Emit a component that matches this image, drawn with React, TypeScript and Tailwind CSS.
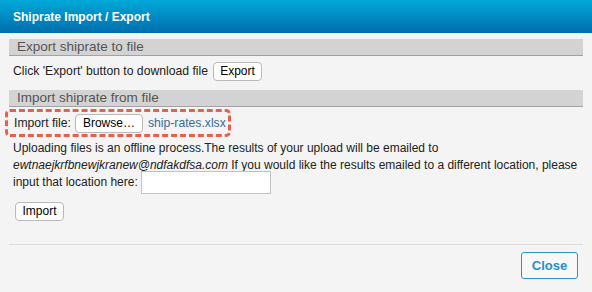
import React from 'react';

const SectionHeader: React.FC<{ title: string }> = ({ title }) => (
  <div className="h-[17px] bg-[#d3d3d3] border-b border-[#a2a2a2] pl-[8px] text-[13.5px] leading-[16px] text-[#555]">
    {title}
  </div>
);

const Button: React.FC<{ label: string; className?: string }> = ({ label, className }) => (
  <button
    className={`h-[19px] shrink-0 bg-white border border-[#b9b9b9] rounded-[4px] text-[12px] leading-[17px] text-black ${className ?? ''}`}
  >
    {label}
  </button>
);

export default function App() {
  return (
    <div
      className="w-[592px] h-[292px] bg-[#f4f4f4] flex flex-col overflow-hidden"
      style={{ fontFamily: '"Liberation Sans", Arial, sans-serif' }}
    >
      {/* Title bar */}
      <div className="h-[33px] shrink-0 bg-gradient-to-b from-[#00a9d9] to-[#006fad] px-[13px] flex items-center text-white font-bold text-[12px]">
        Shiprate Import / Export
      </div>

      <div className="px-[9px] pt-[6px] flex-1 flex flex-col">
        {/* Export section */}
        <SectionHeader title="Export shiprate to file" />
        <div className="flex items-center h-[19px] mt-[6px] pl-[4px] text-[12.2px] text-[#222]">
          <span>Click 'Export' button to download file</span>
          <Button label="Export" className="ml-[5px] w-[49px]" />
        </div>

        {/* Import section */}
        <div className="mt-[9px]">
          <SectionHeader title="Import shiprate from file" />
        </div>
        <div className="mt-[2px] -ml-[4px] w-[226px] h-[28px] border-[3px] border-dashed border-[#e8604c] rounded-[5px] flex items-center pl-[6px] whitespace-nowrap text-[12.2px] text-[#222]">
          <span>Import file:</span>
          <Button label="Browse…" className="ml-[4px] w-[68px]" />
          <span className="ml-[5px] text-[#3c6b97]">ship-rates.xlsx</span>
        </div>

        <p className="mt-[3px] pl-[4px] pr-[4px] text-[12px] leading-[17px] text-[#222]">
          Uploading files is an offline process.The results of your upload will be emailed to
          <br />
          <i>ewtnaejkrfbnewjkranew@ndfakdfsa.com</i> If you would like the results emailed to a
          different location, please input that location here:{' '}
          <input
            type="text"
            className="align-middle -my-[4px] w-[130px] h-[23px] bg-white border border-[#c2c2c2] outline-none"
          />
        </p>

        <div className="mt-[7px] pl-[6px]">
          <Button label="Import" className="w-[49px]" />
        </div>

        <div className="mt-[22px] border-t border-[#dcdcdc]" />

        <div className="flex justify-end mt-[7px] pr-[5px]">
          <button className="w-[57px] h-[27px] border border-[#2a93cb] rounded-[3px] bg-[#f8f8f8] text-[#2a8fc8] font-bold text-[13px]">
            Close
          </button>
        </div>
      </div>
    </div>
  );
}
